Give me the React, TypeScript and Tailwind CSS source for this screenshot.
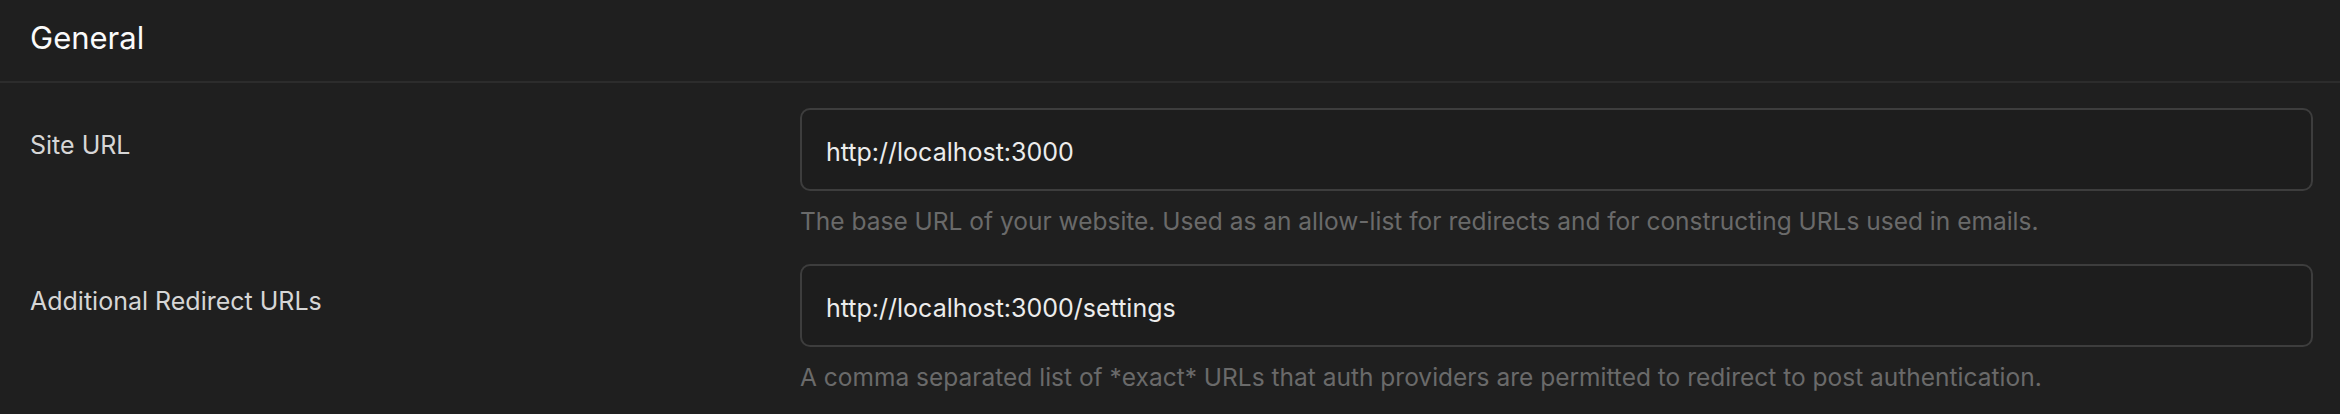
export default function App() {
  const rows = [
    {
      label: "Site URL",
      value: "http://localhost:3000",
      hint: "The base URL of your website. Used as an allow-list for redirects and for constructing URLs used in emails.",
    },
    {
      label: "Additional Redirect URLs",
      value: "http://localhost:3000/settings",
      hint: "A comma separated list of *exact* URLs that auth providers are permitted to redirect to post authentication.",
    },
  ];
  return (
    <div className="w-[2340px] h-[414px] overflow-hidden bg-[#1f1f1f] font-['Inter',sans-serif]">
      <div className="h-[83px] border-b-2 border-[#2c2c2c] px-[30px] pt-[20px]">
        <h2 className="text-[31px] leading-[36px] text-[#fafafa]">General</h2>
      </div>
      <div className="flex flex-col gap-[25px] pt-[25px] pl-[30px] pr-[27px]">
        {rows.map((r) => (
          <div key={r.label} className="grid grid-cols-[770px_1fr]">
            <label className="mt-[19px] text-[25px] leading-[36px] text-[#d6d6d6]">{r.label}</label>
            <div className="flex flex-col">
              <div className="h-[83px] rounded-[10px] border-2 border-[#3d3d3d] bg-[#1d1d1d] pl-[24px] pt-[24px] text-[25px] leading-[36px] text-[#ececec]">
                {r.value}
              </div>
              <p className="mt-[12px] text-[24.5px] leading-[36px] text-[#6a6a6a]">{r.hint}</p>
            </div>
          </div>
        ))}
      </div>
    </div>
  );
}
